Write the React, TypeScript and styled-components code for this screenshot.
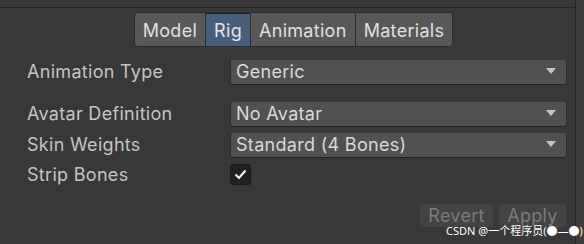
import React from 'react';
import styled, {createGlobalStyle} from 'styled-components';

const GlobalStyle = createGlobalStyle`
  html, body { margin: 0; padding: 0; background: #383838; }
  body { font-family: Inter, "Noto Sans", sans-serif; letter-spacing: 0.3px; }
`;

const tabs = ['Model', 'Rig', 'Animation', 'Materials'];

const Window = styled.div`
  display: flex;
  width: 584px;
  height: 244px;
  position: relative;
  overflow: hidden;
  background: #383838;
`;

const Main = styled.div`
  flex: 1;
  display: flex;
  flex-direction: column;
`;

const Header = styled.div`
  height: 7px;
  border-bottom: 1px solid #262626;
  background: #3a3a3a;
`;

const Scroll = styled.div`
  width: 8px;
  border-left: 1px solid #262626;
  background: #3b3b3b;
`;

const TabBar = styled.div`
  display: flex;
  justify-content: center;
  padding: 4px 0 0 12px;
`;

const TabGroup = styled.div`
  display: flex;
  border: 1px solid #2c2c2c;
  border-radius: 4px;
  overflow: hidden;
`;

const Tab = styled.div<{active?: boolean}>`
  height: 32px;
  display: flex;
  align-items: center;
  padding: 0 8px;
  font-size: 18px;
  color: ${p => p.active ? '#e4e4e4' : '#e0e0e0'};
  background: ${p => p.active ? '#46607c' : '#585858'};
  border-top: ${p => p.active ? '1px solid #1e1e1e' : '1px solid #585858'};
  & + & { border-left: 1px solid #2c2c2c; }
`;

const Form = styled.div`
  display: flex;
  flex-direction: column;
  gap: 6px;
  padding: 12px 8px 0 27px;
`;

const Row = styled.div<{spaced?: boolean}>`
  display: flex;
  align-items: center;
  height: 25px;
  margin-bottom: ${p => p.spaced ? '11px' : '0'};
`;

const CheckRow = styled(Row)`
  margin-top: -1px;
`;

const Label = styled.div`
  width: 203px;
  font-size: 18px;
  color: #c4c4c4;
`;

const Select = styled.div`
  flex: 1;
  height: 24px;
  display: flex;
  align-items: center;
  justify-content: space-between;
  padding: 0 10px 0 5px;
  background: #515151;
  border: 1px solid #2e2e2e;
  border-top-color: #3a3a3a;
  border-bottom-color: #242424;
  border-radius: 3px;
  font-size: 18px;
  color: #dadada;
`;

const Check = styled.div`
  width: 19px;
  height: 19px;
  border-radius: 3px;
  background: #202020;
  border: 1px solid #191919;
  display: flex;
  align-items: center;
  justify-content: center;
`;

const Footer = styled.div`
  display: flex;
  justify-content: flex-end;
  gap: 6px;
  padding: 17px 9px 0 0;
`;

const Button = styled.div<{w: number}>`
  width: ${p => p.w}px;
  height: 23px;
  display: flex;
  align-items: center;
  justify-content: center;
  background: #434343;
  border-radius: 3px;
  font-size: 18px;
  color: #7b7b7b;
`;

const Watermark = styled.div`
  position: absolute;
  left: 446px;
  top: 222px;
  font-family: "Noto Sans", "Noto Sans CJK SC", sans-serif;
  font-size: 11px;
  letter-spacing: 0;
  color: #ffffff;
  white-space: nowrap;
`;

const Arrow = () => (
  <svg width="10" height="7" viewBox="0 0 10 7">
    <path d="M0 0 H10 L5 6 Z" fill="#c4c4c4" />
  </svg>
);

const fields = [
  {label: 'Animation Type', value: 'Generic', spaced: true},
  {label: 'Avatar Definition', value: 'No Avatar'},
  {label: 'Skin Weights', value: 'Standard (4 Bones)'},
];

export default function App() {
  return (
    <>
      <GlobalStyle />
      <Window>
        <Main>
          <Header />
          <TabBar>
            <TabGroup>
              {tabs.map(t => (
                <Tab key={t} active={t === 'Rig'}>{t}</Tab>
              ))}
            </TabGroup>
          </TabBar>
          <Form>
            {fields.map(f => (
              <Row key={f.label} spaced={f.spaced}>
                <Label>{f.label}</Label>
                <Select>
                  <span>{f.value}</span>
                  <Arrow />
                </Select>
              </Row>
            ))}
            <CheckRow>
              <Label>Strip Bones</Label>
              <Check>
                <svg width="13" height="11" viewBox="0 0 13 11">
                  <path d="M1.5 5.5 L5 9 L11.5 1.5" stroke="#f0f0f0" strokeWidth="2.2" fill="none" />
                </svg>
              </Check>
            </CheckRow>
          </Form>
          <Footer>
            <Button w={73}>Revert</Button>
            <Button w={67}>Apply</Button>
          </Footer>
        </Main>
        <Scroll />
        <Watermark>CSDN @一个程序员(●—●)</Watermark>
      </Window>
    </>
  );
}
